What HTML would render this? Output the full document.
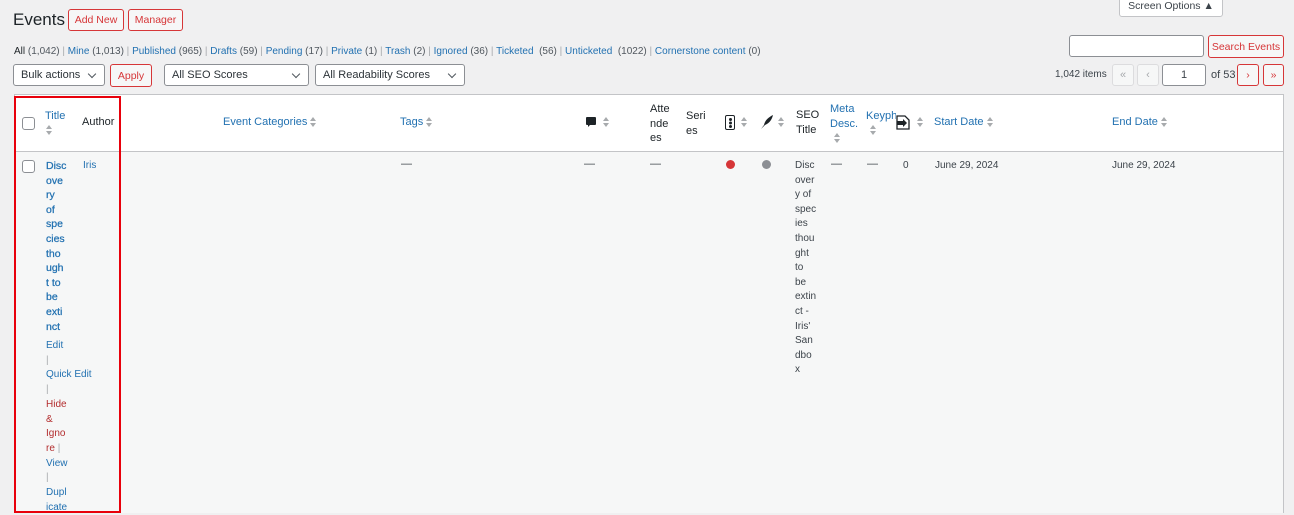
<!DOCTYPE html>
<html><head><meta charset="utf-8"><style>
body{margin:0;width:1294px;height:513px;background:#f0f0f1;font-family:"Liberation Sans",sans-serif;font-size:11px;color:#3c434a;position:relative;overflow:hidden}
.a{position:absolute;white-space:nowrap}
.l{color:#2271b1}
.btn{position:absolute;border:1px solid #d63638;color:#d63638;background:#f6f7f7;border-radius:3px;box-sizing:border-box;text-align:center;font-size:10.5px}
.sel{position:absolute;border:1px solid #8c8f94;background:#fff;border-radius:3px;box-sizing:border-box;font-size:11px;padding-left:7px;line-height:20px;color:#2c3338}
.sel:after{content:"";position:absolute;right:9px;top:6px;width:5px;height:5px;border-right:1.3px solid #50575e;border-bottom:1.3px solid #50575e;transform:rotate(45deg)}
.cb{position:absolute;width:11px;height:11px;border:1px solid #8c8f94;border-radius:3px;background:#fff}
.sort{display:inline-block;width:7px;height:11px;vertical-align:middle;margin-left:3px;position:relative}
.sort:before{content:"";position:absolute;left:0;top:0;border:3.5px solid transparent;border-bottom:4px solid #a7aaad;border-top:0}
.sort:after{content:"";position:absolute;left:0;top:6px;border:3.5px solid transparent;border-top:4px solid #a7aaad;border-bottom:0}
</style></head><body>
<div class="a" style="left:13px;top:10px;font-size:17px;color:#1d2327">Events</div>
<div class="btn" style="left:68px;top:9px;width:56px;height:22px;line-height:20px">Add New</div>
<div class="btn" style="left:128px;top:9px;width:55px;height:22px;line-height:20px">Manager</div>
<div class="a" style="left:1119px;top:-5px;width:102px;height:20px;background:#fff;border:1px solid #c3c4c7;border-radius:0 0 3px 3px;text-align:center;line-height:20px;font-size:10.5px">Screen Options ▲</div>
<div class="a" style="left:14px;top:46px;font-size:10px;color:#a7aaad"><span style="color:#1d2327">All</span> <span style="color:#50575e">(1,042)</span> | <span class="l">Mine</span> <span style="color:#50575e">(1,013)</span> | <span class="l">Published</span> <span style="color:#50575e">(965)</span> | <span class="l">Drafts</span> <span style="color:#50575e">(59)</span> | <span class="l">Pending</span> <span style="color:#50575e">(17)</span> | <span class="l">Private</span> <span style="color:#50575e">(1)</span> | <span class="l">Trash</span> <span style="color:#50575e">(2)</span> | <span class="l">Ignored</span> <span style="color:#50575e">(36)</span> | <span class="l">Ticketed</span> <span style="color:#50575e">&nbsp;(56)</span> | <span class="l">Unticketed</span> <span style="color:#50575e">&nbsp;(1022)</span> | <span class="l">Cornerstone content</span> <span style="color:#50575e">(0)</span></div>
<div class="a" style="left:1069px;top:35px;width:135px;height:22px;border:1px solid #8c8f94;border-radius:3px;background:#fff;box-sizing:border-box"></div>
<div class="btn" style="left:1208px;top:35px;width:76px;height:23px;line-height:22px">Search Events</div>
<div class="sel" style="left:13px;top:64px;width:92px;height:22px">Bulk actions</div>
<div class="btn" style="left:110px;top:64px;width:42px;height:23px;line-height:22px">Apply</div>
<div class="sel" style="left:164px;top:64px;width:145px;height:22px">All SEO Scores</div>
<div class="sel" style="left:315px;top:64px;width:150px;height:22px">All Readability Scores</div>
<div class="a" style="left:1055px;top:69px;font-size:10px">1,042 items</div>
<div class="a" style="left:1112px;top:64px;width:22px;height:22px;border:1px solid #dcdcde;background:#f6f7f7;color:#a7aaad;text-align:center;line-height:21px;border-radius:3px;box-sizing:border-box">«</div>
<div class="a" style="left:1137px;top:64px;width:22px;height:22px;border:1px solid #dcdcde;background:#f6f7f7;color:#a7aaad;text-align:center;line-height:21px;border-radius:3px;box-sizing:border-box">‹</div>
<div class="a" style="left:1162px;top:64px;width:44px;height:22px;border:1px solid #8c8f94;background:#fff;text-align:center;line-height:20px;border-radius:3px;box-sizing:border-box">1</div>
<div class="a" style="left:1211px;top:69px">of 53</div>
<div class="btn" style="left:1237px;top:64px;width:22px;height:22px;line-height:20px">›</div>
<div class="btn" style="left:1263px;top:64px;width:21px;height:22px;line-height:20px">»</div>

<div class="a" style="left:14px;top:94px;width:1270px;height:58px;background:#fff;border:1px solid #c3c4c7;box-sizing:border-box"></div>
<div class="a" style="left:14px;top:152px;width:1270px;height:361px;background:#f6f7f7;border-left:1px solid #c3c4c7;border-right:1px solid #c3c4c7;box-sizing:border-box"></div>

<div class="cb" style="left:22px;top:117px"></div>
<div class="a l" style="left:45px;top:110px">Title</div>
<div class="a" style="left:46px;top:124px"><span class="sort" style="margin:0"></span></div>
<div class="a" style="left:82px;top:116px;color:#1d2327">Author</div>
<div class="a l" style="left:223px;top:116px">Event Categories<span class="sort"></span></div>
<div class="a l" style="left:400px;top:116px">Tags<span class="sort"></span></div>
<div class="a" style="left:586px;top:117px;width:10px;height:8px;background:#1d2327;border-radius:1px"></div>
<div class="a" style="left:588px;top:124px;width:0;height:0;border-left:3px solid #1d2327;border-bottom:3px solid transparent"></div>
<div class="a" style="left:600px;top:116px"><span class="sort"></span></div>
<div class="a" style="left:650px;top:102px;line-height:14.5px;color:#1d2327">Atte<br>nde<br>es</div>
<div class="a" style="left:686px;top:109px;line-height:14.5px;color:#1d2327">Seri<br>es</div>
<div class="a" style="left:725px;top:115px;width:10px;height:15px;border:1.3px solid #1d2327;border-radius:2px;box-sizing:border-box"></div>
<div class="a" style="left:728.5px;top:117.5px;width:3px;height:3px;background:#1d2327;border-radius:50%;box-shadow:0 3.5px #1d2327,0 7px #1d2327"></div>
<div class="a" style="left:738px;top:116px"><span class="sort"></span></div>
<svg class="a" style="left:760px;top:114px" width="14" height="16" viewBox="0 0 14 16"><path d="M1 15 L4 11 C5 6 9 3 13 1 C12 5 10 9 5 11 Z" fill="#1d2327"/></svg>
<div class="a" style="left:775px;top:116px"><span class="sort"></span></div>
<div class="a" style="left:796px;top:108px;line-height:14.5px;color:#1d2327">SEO<br>Title</div>
<div class="a l" style="left:830px;top:102px;line-height:14.5px">Meta<br>Desc.</div>
<div class="a" style="left:834px;top:132px"><span class="sort" style="margin:0"></span></div>
<div class="a l" style="left:866px;top:110px;width:30px;overflow:hidden">Keyphr</div>
<div class="a" style="left:870px;top:124px"><span class="sort" style="margin:0"></span></div>
<svg class="a" style="left:895px;top:114px" width="16" height="16" viewBox="0 0 16 16"><path d="M2 2 H10 L14 6 V15 H2 Z" fill="#fff" stroke="#1d2327" stroke-width="1.3"/><path d="M2 7 L8 7 L8 5 L12 9 L8 13 L8 11 L2 11 Z" fill="#1d2327"/></svg>
<div class="a" style="left:914px;top:116px"><span class="sort"></span></div>
<div class="a l" style="left:934px;top:116px">Start Date<span class="sort"></span></div>
<div class="a l" style="left:1112px;top:116px">End Date<span class="sort"></span></div>

<div class="cb" style="left:22px;top:160px"></div>
<div class="a l" style="left:46px;top:159px;line-height:14.6px;font-size:10.5px;color:#2271b1;-webkit-text-stroke:0.25px #2271b1">Disc<br>ove<br>ry<br>of<br>spe<br>cies<br>tho<br>ugh<br>t to<br>be<br>exti<br>nct</div>
<div class="a" style="left:46px;top:339px;line-height:14.7px;font-size:10px;color:#2271b1">Edit<br><span style="color:#a7aaad">|</span><br>Quick Edit<br><span style="color:#a7aaad">|</span><br><span style="color:#b32d2e">Hide<br>&amp;<br>Igno<br>re</span> <span style="color:#a7aaad">|</span><br>View<br><span style="color:#a7aaad">|</span><br>Dupl<br>icate</div>
<div class="a l" style="left:83px;top:160px;font-size:10px">Iris</div>
<div class="a" style="left:401px;top:158px">—</div>
<div class="a" style="left:584px;top:158px">—</div>
<div class="a" style="left:650px;top:158px">—</div>
<div class="a" style="left:726px;top:160px;width:9px;height:9px;border-radius:50%;background:#d63638"></div>
<div class="a" style="left:762px;top:160px;width:9px;height:9px;border-radius:50%;background:#8c8f94"></div>
<div class="a" style="left:795px;top:159px;line-height:14.6px;font-size:10px">Disc<br>over<br>y of<br>spec<br>ies<br>thou<br>ght<br>to<br>be<br>extin<br>ct -<br>Iris'<br>San<br>dbo<br>x</div>
<div class="a" style="left:831px;top:158px">—</div>
<div class="a" style="left:867px;top:158px">—</div>
<div class="a" style="left:903px;top:160px;font-size:10px">0</div>
<div class="a" style="left:935px;top:160px;font-size:10px">June 29, 2024</div>
<div class="a" style="left:1112px;top:160px;font-size:10px">June 29, 2024</div>

<div class="a" style="left:14px;top:96px;width:107px;height:417px;border:2px solid #e8000b;box-sizing:border-box"></div>
</body></html>
